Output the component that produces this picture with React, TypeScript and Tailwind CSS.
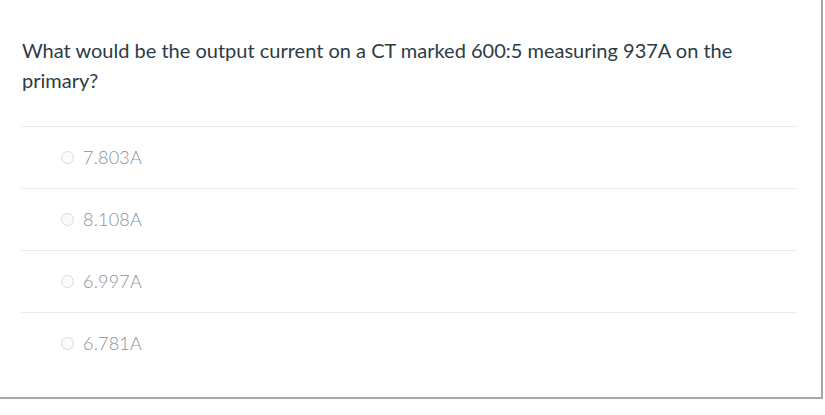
const answers = ["7.803A", "8.108A", "6.997A", "6.781A"];

export default function App() {
  return (
    <div className="h-[415px] w-[825px] bg-white" style={{ fontFamily: "Lato, 'Open Sans', sans-serif" }}>
      <div className="h-[399px] w-[823px] border-r-2 border-b-2 border-[#a6a6a6] pl-[21px] pr-[24px] pt-[35px]">
        <p className="pl-px pb-[31px] text-[20px] leading-[30px] text-[#2d3b45]">
          What would be the output current on a CT marked 600:5 measuring 937A on the primary?
        </p>
        <div>
          {answers.map((a) => (
            <div key={a} className="flex h-[62px] items-center border-t border-[#e8eaec] pl-[40px]">
              <span className="h-[13px] w-[13px] rounded-full border border-[#d8dadd] bg-[#fbfbfb]" />
              <span className="ml-[9px] text-[18px] font-light tracking-[0.2px] text-[#8b9096]">{a}</span>
            </div>
          ))}
        </div>
      </div>
    </div>
  );
}
